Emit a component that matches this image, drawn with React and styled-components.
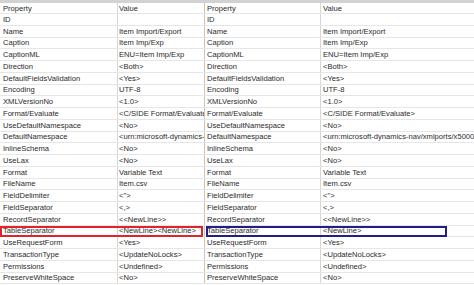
import React from 'react';
import styled, { createGlobalStyle } from 'styled-components';

const GlobalStyle = createGlobalStyle`
  html, body {
    margin: 0;
    padding: 0;
    background: #ffffff;
  }
  body {
    font-family: "Liberation Sans", Arial, sans-serif;
    -webkit-font-smoothing: antialiased;
  }
`;

const Screen = styled.div`
  display: flex;
  width: 474px;
  height: 285px;
  overflow: hidden;
  background: #ffffff;
`;

const Panel = styled.div`
  display: flex;
  flex-direction: column;
  width: ${p => p.$width};
  flex: ${p => (p.$grow ? '1 1 auto' : '0 0 auto')};
  min-width: 0;
`;

const Row = styled.div`
  position: relative;
  display: grid;
  grid-template-columns: ${p => p.$cols};
  height: ${p => (p.$header ? '14px' : '11.75px')};
  box-sizing: border-box;
  border-top: ${p => (p.$header ? '3px solid #d2d2d2' : 'none')};
  border-bottom: 1px solid #e6e6e6;
`;

const Cell = styled.div`
  display: flex;
  align-items: center;
  box-sizing: border-box;
  padding-left: ${p => p.$pad || '2px'};
  border-right: ${p => (p.$divider ? `1px solid ${p.$divider}` : 'none')};
  font-size: 7.6px;
  color: #2a2a2a;
  white-space: nowrap;
  overflow: hidden;
  min-width: 0;
`;

const Highlight = styled.div`
  position: absolute;
  left: ${p => p.$left};
  width: ${p => p.$width};
  top: 0;
  bottom: -1px;
  box-sizing: border-box;
  border: 2px solid ${p => p.$color};
  pointer-events: none;
`;

const base = [
  ['ID', ''],
  ['Name', 'Item Import/Export'],
  ['Caption', 'Item Imp/Exp'],
  ['CaptionML', 'ENU=Item Imp/Exp'],
  ['Direction', '<Both>'],
  ['DefaultFieldsValidation', '<Yes>'],
  ['Encoding', 'UTF-8'],
  ['XMLVersionNo', '<1.0>'],
  ['Format/Evaluate', '<C/SIDE Format/Evaluate>'],
  ['UseDefaultNamespace', '<No>'],
  ['DefaultNamespace', '<urn:microsoft-dynamics-nav/xmlports/x50000>'],
  ['InlineSchema', '<No>'],
  ['UseLax', '<No>'],
  ['Format', 'Variable Text'],
  ['FileName', 'Item.csv'],
  ['FieldDelimiter', '<">'],
  ['FieldSeparator', '<,>'],
  ['RecordSeparator', '<<NewLine>>'],
  ['TableSeparator', null],
  ['UseRequestForm', '<Yes>'],
  ['TransactionType', '<UpdateNoLocks>'],
  ['Permissions', '<Undefined>'],
  ['PreserveWhiteSpace', '<No>'],
];

const PropertyGrid = ({ width, grow, cols, propPad, valuePad, valueDivider, tableSep, highlight }) => (
  <Panel $width={width} $grow={grow}>
    <Row $header $cols={cols}>
      <Cell $pad={propPad} $divider="#d6d6d6">Property</Cell>
      <Cell $pad={valuePad} $divider={valueDivider}>Value</Cell>
    </Row>
    {base.map(([name, value]) => (
      <Row key={name} $cols={cols}>
        <Cell $pad={propPad} $divider="#d6d6d6">{name}</Cell>
        <Cell $pad={valuePad} $divider={valueDivider}>{value === null ? tableSep : value}</Cell>
        {value === null && (
          <Highlight $left={highlight.left} $width={highlight.width} $color={highlight.color} />
        )}
      </Row>
    ))}
  </Panel>
);

export default function App() {
  return (
    <>
      <GlobalStyle />
      <Screen>
        <PropertyGrid
          width="205px"
          cols="118px 87px"
          propPad="3px"
          valuePad="1px"
          valueDivider="#c4c4c4"
          tableSep="<NewLine><NewLine>"
          highlight={{ left: '0px', width: '203px', color: '#e0242a' }}
        />
        <PropertyGrid
          grow
          cols="116px 1fr"
          propPad="2px"
          valuePad="2px"
          tableSep="<NewLine>"
          highlight={{ left: '1px', width: '241px', color: '#1c1f8c' }}
        />
      </Screen>
    </>
  );
}
